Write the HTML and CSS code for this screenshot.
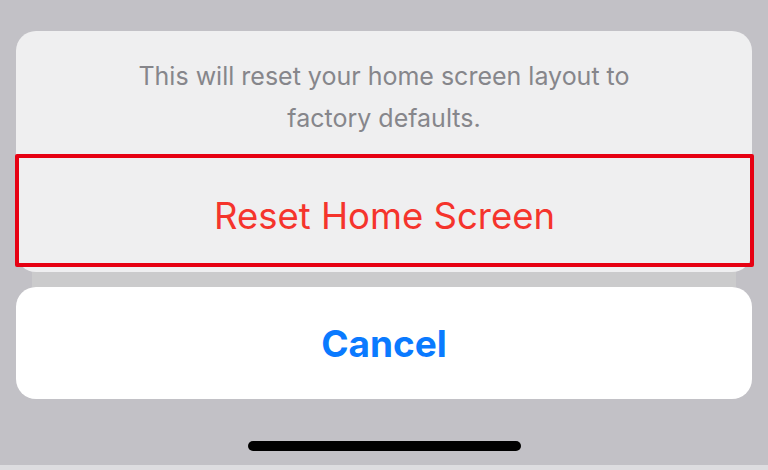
FILE: index.html
```html
<!DOCTYPE html>
<html>
<head>
    <meta charset="utf-8">
    <meta name="viewport" content="width=device-width, initial-scale=1">
    <link rel="stylesheet" href="styles.css">
    <title>Reset Home Screen</title>
</head>
<body>
    <div class="sheet">
        <div class="group">
            <p class="message">This will reset your home screen layout to<br>factory defaults.</p>
            <button class="action destructive">Reset Home Screen</button>
        </div>
        <div class="gap"></div>
        <button class="action cancel">Cancel</button>
    </div>
    <div class="home-bar">
        <div class="home-indicator"></div>
    </div>
    <div class="edge"></div>
</body>
</html>
```

FILE: styles.css
```css
html {
    background-color: #c2c1c6;
}
body {
    margin: 0;
    height: 470px;
    overflow: hidden;
    font-family: Inter, "Noto Sans", sans-serif;
    display: flex;
    flex-direction: column;
}
.sheet {
    padding: 31px 16px 0;
    display: flex;
    flex-direction: column;
}
.group {
    background-color: #efeff0;
    border-radius: 20px;
    padding: 24px 0 5px;
    display: flex;
    flex-direction: column;
}
.message {
    margin: 0 0 15px;
    text-align: center;
    color: #86868b;
    font-size: 25px;
    line-height: 42px;
}
.action {
    font-family: inherit;
    border: 0;
    background: none;
    padding: 0;
    display: flex;
    align-items: center;
    justify-content: center;
}
.destructive {
    margin: 0 -2px 0 -1px;
    height: 113px;
    padding-top: 10px;
    box-sizing: border-box;
    border: 4px solid #e60012;
    border-radius: 2px;
    color: #f5342c;
    font-size: 36.5px;
}
.gap {
    height: 15px;
    margin: 0 16px;
    background-color: #cbcbcc;
}
.cancel {
    height: 112px;
    background-color: white;
    border-radius: 20px;
    color: #0a7aff;
    font-size: 37px;
    font-weight: 700;
}
.home-bar {
    flex: 1;
    display: flex;
    justify-content: center;
    padding-top: 42px;
}
.home-indicator {
    width: 273px;
    height: 10px;
    border-radius: 5px;
    background-color: black;
}
.edge {
    height: 5px;
    background-color: #dddde0;
}
```
